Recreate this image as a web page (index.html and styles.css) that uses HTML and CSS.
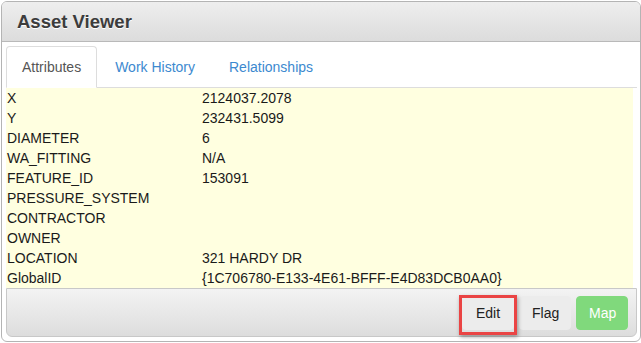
FILE: index.html
```html
<!DOCTYPE html>
<html lang="en">
<head>
  <meta charset="UTF-8">
  <title>Asset Viewer</title>
  <link rel="stylesheet" href="styles.css">
</head>
<body>

<div class="panel">
  <div class="panel-header">
    <h1>Asset Viewer</h1>
  </div>

  <div class="panel-body">
    <ul class="tabs">
      <li class="tab active"><a>Attributes</a></li>
      <li class="tab"><a>Work History</a></li>
      <li class="tab"><a>Relationships</a></li>
    </ul>

    <table class="attrs">
      <tr><td class="name">X</td><td>2124037.2078</td></tr>
      <tr><td class="name">Y</td><td>232431.5099</td></tr>
      <tr><td class="name">DIAMETER</td><td>6</td></tr>
      <tr><td class="name">WA_FITTING</td><td>N/A</td></tr>
      <tr><td class="name">FEATURE_ID</td><td>153091</td></tr>
      <tr><td class="name">PRESSURE_SYSTEM</td><td></td></tr>
      <tr><td class="name">CONTRACTOR</td><td></td></tr>
      <tr><td class="name">OWNER</td><td></td></tr>
      <tr><td class="name">LOCATION</td><td>321 HARDY DR</td></tr>
      <tr><td class="name">GlobalID</td><td>{1C706780-E133-4E61-BFFF-E4D83DCB0AA0}</td></tr>
    </table>

    <div class="footer">
      <button class="btn edit">Edit</button>
      <button class="btn">Flag</button>
      <button class="btn map">Map</button>
    </div>
  </div>
</div>

</body>
</html>
```

FILE: styles.css
```css
body {
  margin: 1px 0 0 1px;
  font-family: "Liberation Sans", Arial, sans-serif;
  font-size: 14px;
  color: #222;
  background: #fff;
}

.panel {
  box-sizing: border-box;
  width: 640px;
  height: 341px;
  border: 1px solid #b4b4b4;
  border-radius: 6px;
  overflow: hidden;
  background: #fff;
}

.panel-header {
  height: 39px;
  border-bottom: 1px solid #b9b9b9;
  background: linear-gradient(#eeeeee, #dcdcdc);
  display: flex;
  align-items: center;
  padding-left: 15px;
}

h1 {
  margin: 0;
  font-size: 18.5px;
  font-weight: bold;
  color: #3c3c3c;
  text-shadow: 0 1px 0 #fff;
}

.panel-body {
  padding: 4px 3px 4px 4px;
}

.tabs {
  list-style: none;
  margin: 0;
  padding: 0;
  display: flex;
  border-bottom: 1px solid #dddddd;
}

.tab {
  margin-right: 2px;
  margin-bottom: -1px;
}

.tab a {
  display: block;
  padding: 10px 15px;
  line-height: 20px;
  border: 1px solid transparent;
  border-radius: 4px 4px 0 0;
  color: #3c89cf;
}

.tab.active a {
  color: #555;
  background: #fff;
  border-color: #dddddd #dddddd transparent;
}

.attrs {
  width: 627px;
  border-collapse: collapse;
  background: #ffffe0;
}

.attrs td {
  padding: 0 0 0 1px;
  height: 20px;
  line-height: 20px;
  color: #1a1a1a;
}

.attrs .name {
  width: 194px;
}

.footer {
  display: flex;
  justify-content: flex-end;
  gap: 5px;
  padding: 7px 8px 6px;
  border: 1px solid #c8c8c8;
  border-radius: 0 0 6px 6px;
  background: linear-gradient(#f3f3f3, #dddddd);
}

.btn {
  font-family: "Liberation Sans", Arial, sans-serif;
  font-size: 14px;
  line-height: 20px;
  padding: 6px 12px;
  width: 52px;
  border: 1px solid #ececec;
  border-radius: 4px;
  background: #ececec;
  color: #222;
}

/* red highlight box drawn over the Edit button */
.btn.edit {
  position: relative;
}

.btn.edit::after {
  content: "";
  position: absolute;
  left: -4px;
  right: -4px;
  top: -2px;
  bottom: -6px;
  border: 3px solid #ea4444;
  box-shadow: 1px 2px 4px rgba(0, 0, 0, 0.35);
}

.btn.map {
  background: #80d97c;
  border-color: #80d97c;
  color: #fff;
}
```
